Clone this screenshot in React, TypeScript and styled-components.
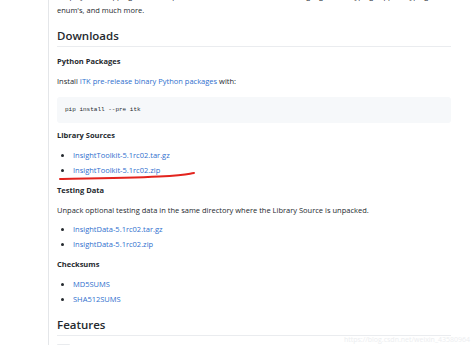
import React from 'react'
import styled, { createGlobalStyle } from 'styled-components'

const GlobalStyle = createGlobalStyle`
  html, body {
    margin: 0;
    padding: 0;
    background: #ffffff;
    overflow: hidden;
  }
  body {
    font-family: 'Open Sans', 'Noto Sans', sans-serif;
    color: #24292e;
  }
`

const Page = styled.div`
  width: 474px;
  height: 345px;
  overflow: hidden;
  position: relative;
  padding-left: 48px;
  box-sizing: border-box;
`

const Article = styled.div`
  border-left: 1px solid #e4e6e9;
  padding: 0 23px 0 8px;
  margin-top: -11px;
  min-height: 400px;
  font-size: 7.5px;
  line-height: 14px;
`

const Paragraph = styled.p<{ $tight?: boolean }>`
  margin: 0 0 ${(p) => (p.$tight ? 5 : 7)}px;
  white-space: nowrap;
`

const Heading = styled.h2`
  font-size: 11.5px;
  font-weight: 600;
  line-height: 16px;
  margin: 11px 0 8px;
  padding-bottom: 2px;
  border-bottom: 1px solid #eaecef;
`

const SubHeading = styled.h4`
  font-size: 7.5px;
  font-weight: 700;
  line-height: 12px;
  margin: 7px 0 7px;
`

const Link = styled.a`
  color: #2f6fce;
  text-decoration: none;
`

const CodeBlock = styled.pre`
  margin: 9px 0 6px;
  padding: 6px 8px;
  background: #f6f8fa;
  border-radius: 3px;
  font-family: 'Liberation Mono', 'DejaVu Sans Mono', monospace;
  font-size: 6px;
  line-height: 14px;
  color: #24292e;

  & + h4 {
    margin-top: 6px;
  }
`

const List = styled.ul`
  margin: 0 0 6px;
  padding-left: 16px;
  list-style: disc;
`

const Item = styled.li`
  position: relative;
  line-height: 14.5px;
`

const RedMark = styled.svg`
  position: absolute;
  left: -14px;
  top: 8px;
  width: 136px;
  height: 10px;
  overflow: visible;
`

const Watermark = styled.div`
  position: absolute;
  right: 4px;
  bottom: 1px;
  font-size: 7px;
  color: #eceef0;
`

const Badge = styled.div`
  width: 13px;
  height: 4px;
  background: #e9ebee;
  border-radius: 1px 1px 0 0;
`

const App = () => {
  return (
    <>
      <GlobalStyle />
      <Page>
        <Article>
          <Paragraph>
            simplify the wrapping of C++ templates, classes and functions for all languages, with typing support, typing enum
            <br />
            enum's, and much more.
          </Paragraph>

          <Heading>Downloads</Heading>

          <SubHeading>Python Packages</SubHeading>
          <Paragraph>
            Install <Link>ITK pre-release binary Python packages</Link> with:
          </Paragraph>
          <CodeBlock>pip install --pre itk</CodeBlock>

          <SubHeading>Library Sources</SubHeading>
          <List>
            <Item>
              <Link>InsightToolkit-5.1rc02.tar.gz</Link>
            </Item>
            <Item>
              <Link>InsightToolkit-5.1rc02.zip</Link>
              <RedMark viewBox="0 0 136 10">
                <path
                  d="M1 8 C 30 7.5, 70 7, 100 5.5 S 128 3, 135 2"
                  fill="none"
                  stroke="#e3241e"
                  strokeWidth="2"
                  strokeLinecap="round"
                />
              </RedMark>
            </Item>
          </List>

          <SubHeading>Testing Data</SubHeading>
          <Paragraph $tight>
            Unpack optional testing data in the same directory where the Library Source is unpacked.
          </Paragraph>
          <List>
            <Item>
              <Link>InsightData-5.1rc02.tar.gz</Link>
            </Item>
            <Item>
              <Link>InsightData-5.1rc02.zip</Link>
            </Item>
          </List>

          <SubHeading>Checksums</SubHeading>
          <List>
            <Item>
              <Link>MD5SUMS</Link>
            </Item>
            <Item>
              <Link>SHA512SUMS</Link>
            </Item>
          </List>

          <Heading>Features</Heading>
          <Badge />
        </Article>
        <Watermark>https://blog.csdn.net/weixin_43580964</Watermark>
      </Page>
    </>
  )
}

export default App
